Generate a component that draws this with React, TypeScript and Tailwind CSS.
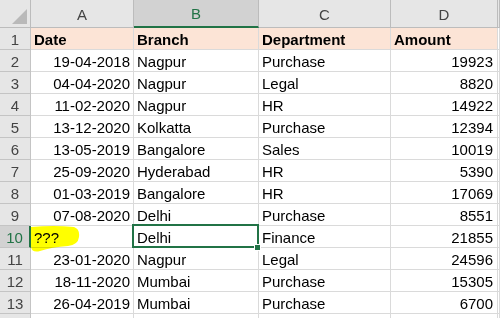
const cols = ["A", "B", "C", "D", ""];

const rows = [
  ["Date", "Branch", "Department", "Amount"],
  ["19-04-2018", "Nagpur", "Purchase", "19923"],
  ["04-04-2020", "Nagpur", "Legal", "8820"],
  ["11-02-2020", "Nagpur", "HR", "14922"],
  ["13-12-2020", "Kolkatta", "Purchase", "12394"],
  ["13-05-2019", "Bangalore", "Sales", "10019"],
  ["25-09-2020", "Hyderabad", "HR", "5390"],
  ["01-03-2019", "Bangalore", "HR", "17069"],
  ["07-08-2020", "Delhi", "Purchase", "8551"],
  ["???", "Delhi", "Finance", "21855"],
  ["23-01-2020", "Nagpur", "Legal", "24596"],
  ["18-11-2020", "Mumbai", "Purchase", "15305"],
  ["26-04-2019", "Mumbai", "Purchase", "6700"],
  ["", "", "", ""],
];

export default function App() {
  return (
    <div
      className="relative w-[500px] h-[318px] overflow-hidden bg-white text-black"
      style={{ fontFamily: '"Liberation Sans", Arial, sans-serif' }}
    >
      <div className="grid grid-cols-[31px_103px_125px_132px_107px_1fr] grid-rows-[28px] auto-rows-[22px]">
        {/* corner */}
        <div className="relative bg-[#e6e6e6] border-r border-b border-[#bcbcbc]">
          <div className="absolute right-[3px] bottom-[3px] w-0 h-0 border-l-[15px] border-l-transparent border-b-[15px] border-b-[#b9b9b9]" />
        </div>
        {/* column headers */}
        {cols.map((c, k) => (
          <div
            key={k}
            className={
              c === "B"
                ? "bg-[#d2d2d2] border-r border-[#bcbcbc] border-b-2 border-b-[#217346] text-[#217346] text-[15px] leading-[24px] pt-[2px] text-center"
                : "bg-[#e6e6e6] border-r border-b border-[#bcbcbc] text-[#444] text-[15px] leading-[25px] pt-[2px] text-center"
            }
          >
            {c}
          </div>
        ))}

        {rows.map((r, i) => {
          const n = i + 1;
          const sel = n === 10;
          const head = n === 1;
          return [
            <div
              key={`h${n}`}
              className={
                sel
                  ? "bg-[#d2d2d2] border-r-2 border-r-[#217346] border-b border-b-[#c4c4c4] text-[#217346] text-[15px] leading-[18px] pt-[3px] text-center"
                  : "bg-[#e6e6e6] border-r border-b border-[#c4c4c4] text-[#444] text-[15px] leading-[18px] pt-[3px] text-center"
              }
            >
              {n < 14 ? n : ""}
            </div>,
            ...r.map((v, j) => (
              <div
                key={`c${n}-${j}`}
                className={`border-r border-b border-[#dadada] text-[15px] leading-[18px] pt-[3px] px-[3px] whitespace-nowrap overflow-hidden ${
                  head ? "bg-[#fce4d6] font-bold" : ""
                } ${!head && (j === 3 || (j === 0 && v !== "???")) ? "text-right" : "text-left"} ${
                  !head && j === 3 ? "pr-[4px]" : ""
                }`}
              >
                {v}
              </div>
            )),
            <div key={`e${n}`} className="border-r border-b border-[#dadada]" />,
          ];
        })}
      </div>

      {/* highlighter on A10 */}
      <svg
        className="absolute left-[28px] top-[224px] mix-blend-multiply pointer-events-none"
        width="56"
        height="34"
        viewBox="0 0 56 34"
      >
        <path
          d="M3 3 Q 26 1 46 3 Q 52 5 51 13 Q 50 21 40 22 Q 24 23 12 27 Q 4 29 3 23 Z"
          fill="#ffff00"
          style={{ filter: "blur(0.7px)" }}
        />
      </svg>

      {/* selected cell B10 */}
      <div className="absolute left-[132px] top-[224px] w-[127px] h-[24px] border-2 border-[#217346] pointer-events-none" />
      <div className="absolute left-[254px] top-[244px] w-[7px] h-[7px] bg-[#217346] border border-white pointer-events-none" />
    </div>
  );
}
